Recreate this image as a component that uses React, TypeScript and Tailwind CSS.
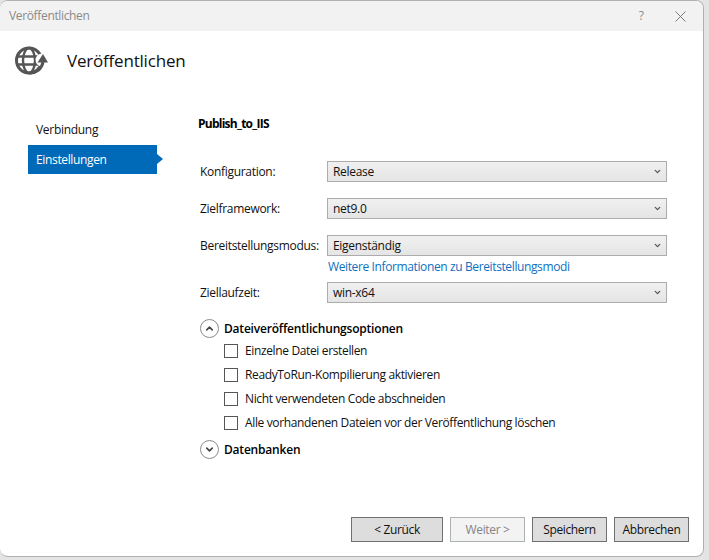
import { ChevronDown, ChevronUp } from 'lucide-react'

const font = { fontFamily: '"Open Sans", sans-serif' }

function Row({ label, value, mb }: { label: string; value: string; mb: string }) {
  return (
    <div className={`flex items-center ${mb}`}>
      <span className="w-[127px] shrink-0 text-[12px] text-[#111] tracking-[-0.3px]">{label}</span>
      <div className="w-[340px] h-[21px] flex items-center justify-between border border-[#acacac] bg-gradient-to-b from-[#f0f0f0] to-[#e5e5e5] pl-[5px] pr-[4px] text-[12px] text-[#111] tracking-[-0.3px]">
        <span>{value}</span>
        <ChevronDown size={9} strokeWidth={3.5} className="text-[#555]" />
      </div>
    </div>
  )
}

function Check({ label }: { label: string }) {
  return (
    <div className="flex items-center h-[24px]">
      <div className="w-[14px] h-[14px] border border-[#555] bg-white mr-[7px]" />
      <span className="text-[12px] text-[#111] tracking-[-0.36px]">{label}</span>
    </div>
  )
}

function Toggle({ open, label }: { open: boolean; label: string }) {
  return (
    <div className="flex items-center">
      <div className="w-[19px] h-[19px] rounded-full border border-[#8a8a8a] bg-white flex items-center justify-center mr-[5px]">
        {open ? <ChevronUp size={11} strokeWidth={3.5} className="text-[#444]" /> : <ChevronDown size={11} strokeWidth={3.5} className="text-[#444]" />}
      </div>
      <span className="text-[12px] font-semibold text-black tracking-[-0.2px]">{label}</span>
    </div>
  )
}

function Btn({ label, w, disabled, mr }: { label: string; w: string; disabled?: boolean; mr: string }) {
  return (
    <div className={`${w} ${mr} h-[25px] flex items-center justify-center border text-[12px] tracking-[-0.35px] ${disabled ? 'border-[#adb2b5] bg-[#f3f3f3] text-[#838383]' : 'border-[#707070] bg-[#dddddd] text-[#111]'}`}>
      {label}
    </div>
  )
}

export default function App() {
  return (
    <div className="w-[709px] h-[560px] bg-[#e4e4e4] overflow-hidden" style={font}>
      <div className="w-[704px] h-[557px] bg-white border-t border-r border-b border-[#b0b0b0] rounded-[8px] flex flex-col overflow-hidden">
        <div className="h-[30px] shrink-0 bg-[#f2f2f2] flex items-center justify-between pl-[9px] pr-[17px]">
          <span className="text-[12px] text-[#8a8a8a] tracking-[-0.35px]">Veröffentlichen</span>
          <div className="flex items-center gap-[31px]">
            <span className="text-[12px] text-[#8a8a8a]">?</span>
            <svg width="11" height="11" viewBox="0 0 11 11" stroke="#7a7a7a" strokeWidth="1"><path d="M0.5 0.5 L10.5 10.5 M10.5 0.5 L0.5 10.5" /></svg>
          </div>
        </div>

        <div className="flex items-center h-[60px] shrink-0 pl-[15px]">
          <svg width="33" height="30" viewBox="0 0 33 30" fill="none" stroke="#555" strokeWidth="3">
            <circle cx="14" cy="14.5" r="12.5" />
            <ellipse cx="14" cy="14.5" rx="6" ry="12.5" strokeWidth="2.4" />
            <path d="M2 10.5 H26 M2 18.5 H26" strokeWidth="2.4" />
            <circle cx="27" cy="14" r="6.5" fill="#fff" stroke="none" />
            <path d="M14 27 a13 13 0 0 0 14 -11" strokeWidth="3" />
            <path d="M22.5 16.5 L28 8 L33 16.5 Z" fill="#555" stroke="none" />
          </svg>
          <span className="ml-[19px] text-[17px] text-[#111] tracking-[-0.2px]">Veröffentlichen</span>
        </div>

        <div className="flex flex-1 min-h-0">
          <div className="w-[198px] shrink-0 pl-[28px] pt-[25px]">
            <div className="h-[29px] pb-[2px] flex items-center pl-[8px] text-[12px] text-[#111] tracking-[-0.3px]">Verbindung</div>
            <div className="relative w-[129px] h-[29px] bg-[#0069b8] flex items-center pl-[8px] text-[12px] text-white tracking-[-0.35px]">
              Einstellungen
              <div className="absolute left-full top-[9px] border-y-[5px] border-y-transparent border-l-[6px] border-l-[#0069b8]" />
            </div>
          </div>

          <div className="flex-1 flex flex-col pt-[24px]">
            <div className="text-[12px] font-bold text-black tracking-[-0.75px] h-[17px] leading-[17px] mb-[29px]">Publish_to_IIS</div>
            <div className="pl-[2px]">
              <Row label="Konfiguration:" value="Release" mb="mb-[16px]" />
              <Row label="Zielframework:" value="net9.0" mb="mb-[16px]" />
              <Row label="Bereitstellungsmodus:" value="Eigenständig" mb="mb-0" />
              <div className="pl-[128px] h-[26px] pb-[5px] flex items-center text-[12px] text-[#0e70c0] tracking-[-0.38px]">Weitere Informationen zu Bereitstellungsmodi</div>
              <Row label="Ziellaufzeit:" value="win-x64" mb="mb-[16px]" />
              <Toggle open label="Dateiveröffentlichungsoptionen" />
              <div className="pl-[24px] mt-[1px] mb-[5px]">
                <Check label="Einzelne Datei erstellen" />
                <Check label="ReadyToRun-Kompilierung aktivieren" />
                <Check label="Nicht verwendeten Code abschneiden" />
                <Check label="Alle vorhandenen Dateien vor der Veröffentlichung löschen" />
              </div>
              <Toggle open={false} label="Datenbanken" />
            </div>
          </div>
        </div>

        <div className="flex justify-end shrink-0 pr-[14px] pb-[14px]">
          <Btn label="< Zurück" w="w-[92px]" mr="mr-[7px]" />
          <Btn label="Weiter >" w="w-[75px]" mr="mr-[7px]" disabled />
          <Btn label="Speichern" w="w-[75px]" mr="mr-[7px]" />
          <Btn label="Abbrechen" w="w-[75px]" mr="mr-0" />
        </div>
      </div>
    </div>
  )
}
